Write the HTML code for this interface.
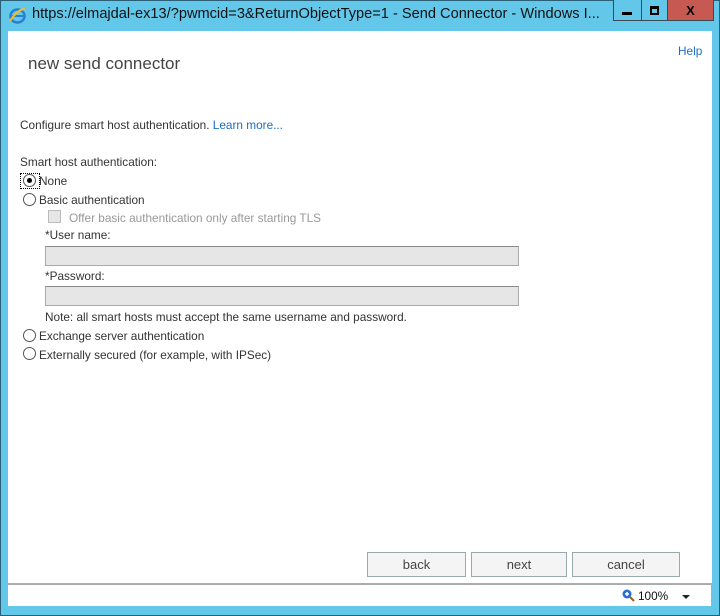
<!DOCTYPE html><html><head><style>
body{margin:0;width:720px;height:616px;background:#63c7ea;font-family:"Liberation Sans",sans-serif;position:relative;overflow:hidden}
.frame{position:absolute;left:0;top:0;width:718px;height:614px;border:1px solid #2a5f78}
.t{position:absolute;font-size:11.8px;color:#333;white-space:nowrap}
.content{position:absolute;left:8px;top:31px;width:704px;height:552px;background:#fff}
.status{position:absolute;left:8px;top:584px;width:703px;height:21px;background:#fff;border-top:1px solid #aaa}
.radio{position:absolute;width:11px;height:11px;border:1px solid #555;border-radius:50%;background:#fff}
.inp{position:absolute;left:45px;width:472px;height:18px;background:#e6e6e6;border:1px solid #aaa;border-top-color:#888}
.btn{position:absolute;top:552px;height:23px;background:#f4f4f4;border:1px solid #9aa;font-size:13px;color:#444;text-align:center;line-height:23px}
.wb{position:absolute;top:0;height:20px;border:1px solid #3a4a55;border-top:0;background:#63c7ea}
</style></head><body>
<div class="frame"></div>
<svg style="position:absolute;left:8px;top:6px" width="19" height="19" viewBox="0 0 19 19"><ellipse cx="9.5" cy="10" rx="7" ry="6.5" fill="none" stroke="#2a7fd4" stroke-width="2.5"/><rect x="4" y="9" width="11" height="2" fill="#2a7fd4"/><path d="M2 15 Q10 3 17 3" stroke="#f4c020" stroke-width="2" fill="none"/></svg>
<div class="t" style="left:32px;top:6px;font-size:14.6px;color:#111">https://elmajdal-ex13/?pwmcid=3&amp;ReturnObjectType=1 - Send Connector - Windows I...</div>
<div class="wb" style="left:613px;width:27px"><div style="position:absolute;left:8px;top:12px;width:10px;height:3px;background:#000"></div></div>
<div class="wb" style="left:641px;width:25px"><div style="position:absolute;left:8px;top:6px;width:5px;height:4px;border:2px solid #000;border-top-width:3px"></div></div>
<div class="wb" style="left:667px;width:45px;background:#c65a52;color:#000;font-weight:bold;font-size:13px;text-align:center;line-height:22px">X</div>
<div class="content"></div>
<div class="t" style="left:678px;top:44px;color:#1a6fc4">Help</div>
<div class="t" style="left:28px;top:54px;font-size:17px;color:#444">new send connector</div>
<div class="t" style="left:20px;top:118px">Configure smart host authentication. <span style="color:#1a6fc4">Learn more...</span></div>
<div class="t" style="left:20px;top:155px">Smart host authentication:</div>
<div style="position:absolute;left:20px;top:173px;width:18px;height:14px;border:1px dotted #000"></div>
<div class="radio" style="left:23px;top:174px"></div><div style="position:absolute;left:27px;top:178px;width:5px;height:5px;background:#000;border-radius:50%"></div>
<div class="t" style="left:39px;top:174px">None</div>
<div class="radio" style="left:23px;top:193px"></div>
<div class="t" style="left:39px;top:193px">Basic authentication</div>
<div style="position:absolute;left:48px;top:210px;width:11px;height:11px;background:#e6e6e6;border:1px solid #bbb"></div>
<div class="t" style="left:69px;top:211px;color:#999">Offer basic authentication only after starting TLS</div>
<div class="t" style="left:45px;top:228px">*User name:</div>
<div class="inp" style="top:246px"></div>
<div class="t" style="left:45px;top:269px">*Password:</div>
<div class="inp" style="top:286px"></div>
<div class="t" style="left:45px;top:310px">Note: all smart hosts must accept the same username and password.</div>
<div class="radio" style="left:23px;top:329px"></div>
<div class="t" style="left:39px;top:329px">Exchange server authentication</div>
<div class="radio" style="left:23px;top:347px"></div>
<div class="t" style="left:39px;top:348px">Externally secured (for example, with IPSec)</div>
<div class="btn" style="left:367px;width:97px">back</div>
<div class="btn" style="left:471px;width:94px">next</div>
<div class="btn" style="left:572px;width:106px">cancel</div>
<div class="status"></div>
<svg style="position:absolute;left:622px;top:589px" width="13" height="13"><circle cx="5" cy="5" r="4.5" fill="#2a6fd4"/><path d="M3 5h4M5 3v4" stroke="#fff" stroke-width="1.5"/><path d="M8 8l4 4" stroke="#a06020" stroke-width="2"/></svg>
<div class="t" style="left:638px;top:589px;color:#111">100%</div>
<div style="position:absolute;left:682px;top:595px;border:4px solid transparent;border-top:4px solid #222;border-bottom:0"></div>
</body></html>
